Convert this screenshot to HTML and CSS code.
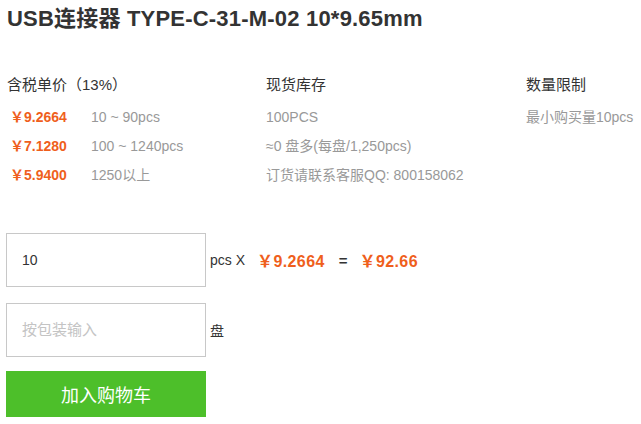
FILE: index.html
```html
<!DOCTYPE html>
<html lang="zh-CN">
<head>
  <meta charset="UTF-8">
  <title>USB连接器 TYPE-C-31-M-02</title>
  <link rel="stylesheet" href="styles.css">
</head>
<body>

  <h1 class="title">USB连接器 TYPE-C-31-M-02 10*9.65mm</h1>

  <div class="info">
    <div class="col">
      <div class="col-head">含税单价（13%）</div>
      <div class="line"><span class="price">￥9.2664</span><span class="range">10 ~ 90pcs</span></div>
      <div class="line"><span class="price">￥7.1280</span><span class="range">100 ~ 1240pcs</span></div>
      <div class="line"><span class="price">￥5.9400</span><span class="range">1250以上</span></div>
    </div>
    <div class="col">
      <div class="col-head">现货库存</div>
      <div class="line muted">100PCS</div>
      <div class="line muted">≈0 盘多(每盘/1,250pcs)</div>
      <div class="line muted">订货请联系客服QQ: 800158062</div>
    </div>
    <div class="col">
      <div class="col-head">数量限制</div>
      <div class="line muted">最小购买量10pcs</div>
    </div>
  </div>

  <div class="buy">
    <div class="buy-row">
      <input class="qty" type="text" value="10">
      <span class="unit">pcs X</span>
      <span class="sum">￥9.2664</span>
      <span class="eq">=</span>
      <span class="sum">￥92.66</span>
    </div>
    <div class="buy-row">
      <input class="qty" type="text" placeholder="按包装输入">
      <span class="unit">盘</span>
    </div>
    <button class="cart">加入购物车</button>
  </div>

</body>
</html>
```

FILE: styles.css
```css
body {
  margin: 0;
  padding: 0 7px;
  font-family: "Liberation Sans", "Noto Sans CJK SC", sans-serif;
  color: #333;
  background: #fff;
}

.title {
  margin: 6px 0 0;
  font-size: 22px;
  line-height: 26px;
  letter-spacing: 0.2px;
  font-weight: bold;
}

.info {
  display: grid;
  grid-template-columns: 259px 260px auto;
  margin-top: 41px;
}

.col-head {
  font-size: 15px;
  line-height: 24px;
  margin-bottom: 6px;
}

.line {
  font-size: 14px;
  line-height: 29px;
  display: flex;
  white-space: nowrap;
}

.price {
  width: 84px;
  padding-left: 3px;
  box-sizing: border-box;
  color: #ef5f1c;
  font-weight: bold;
}

.range,
.muted {
  color: #999;
}

.buy {
  margin-top: 43px;
  display: flex;
  flex-direction: column;
  gap: 16px;
}

.buy-row {
  display: flex;
  align-items: center;
}

.qty {
  width: 200px;
  height: 54px;
  box-sizing: border-box;
  margin: 0 0 0 -1px;
  padding: 0 15px;
  border: 1px solid #c8c8c8;
  font-family: inherit;
  font-size: 14px;
  color: #333;
  outline: none;
}

.qty::placeholder {
  color: #c4c4c4;
  font-size: 15px;
}

.unit {
  margin-left: 4px;
  font-size: 14px;
  color: #333;
}

.sum {
  margin-left: 12px;
  font-size: 16px;
  letter-spacing: 0.4px;
  font-weight: bold;
  color: #ef5f1c;
}

.eq {
  margin-left: 14px;
  font-size: 15px;
  font-weight: bold;
}

.cart {
  width: 200px;
  height: 46px;
  margin: -2px 0 0 -1px;
  border: none;
  background: #4dbf2a;
  color: #fff;
  font-family: inherit;
  font-size: 18px;
  cursor: pointer;
}
```
